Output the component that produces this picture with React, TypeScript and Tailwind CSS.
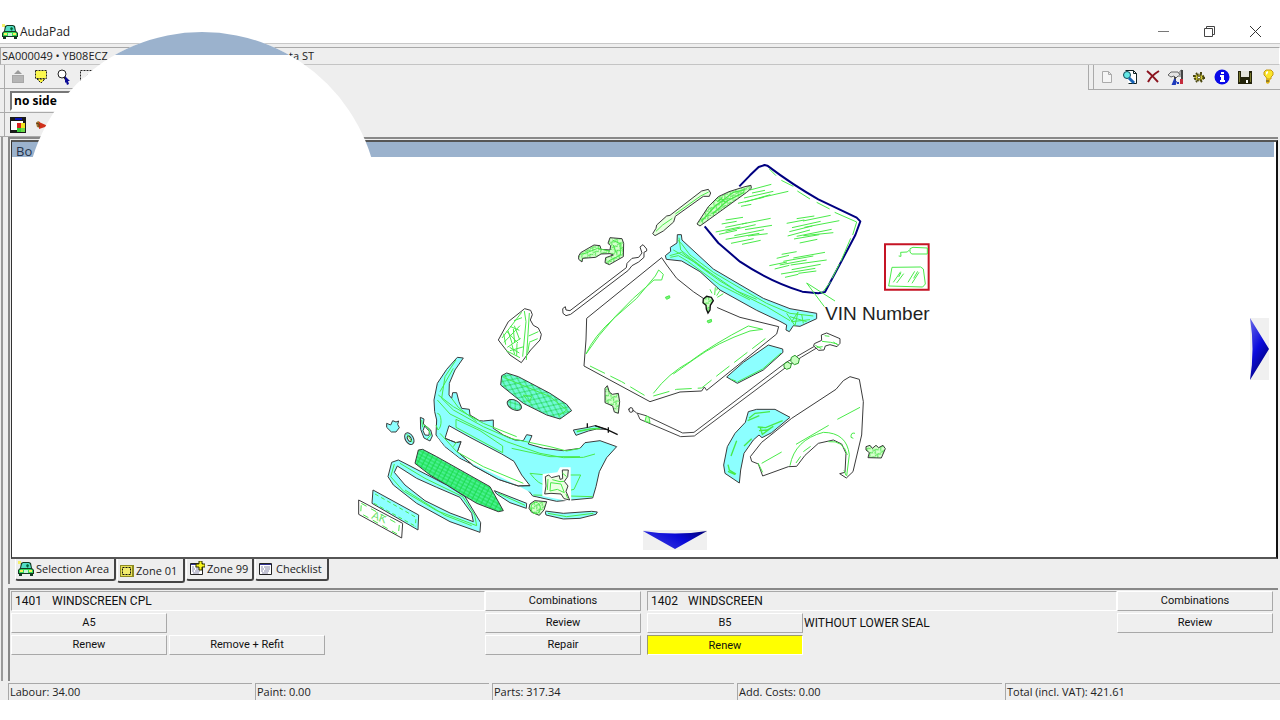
import React from "react";

const zones = [
  { label: "Selection Area", icon: <CarIcon />, width: "w-[101px]" },
  { label: "Zone 01", icon: <ZoneIcon />, width: "w-[68px]", active: true },
  { label: "Zone 99", icon: <ListIcon plus />, width: "w-[68px]" },
  { label: "Checklist", icon: <ListIcon />, width: "w-[74px]" },
];

const totals = [
  "Labour: 34.00",
  "Paint: 0.00",
  "Parts: 317.34",
  "Add. Costs: 0.00",
  "Total (incl. VAT): 421.61",
];

function CarIcon() {
  return (
    <svg width="16" height="16" viewBox="0 0 16 16" aria-hidden="true">
      <path d="M0 0h3v3H0z" fill="#f4f06a" />
      <path d="M5 1h6l2 1 1 5 2 2v4h-1v2h-3v-2H4v2H1v-2H0V9l2-2 1-5z" fill="#143a22" />
      <path d="M5 2h6l1 1 1 4H3l1-4z" fill="#52dcc4" />
      <path d="M1 9l2-1h10l2 1v3H1z" fill="#35d85a" />
      <path d="M2 9h3v2H2zM11 9h3v2h-3z" fill="#f6f35c" />
      <path d="M6 9h4v3H6z" fill="#c8f5dc" />
      <path d="M9 3l2 1-1 3-2-2z" fill="#063" />
    </svg>
  );
}

function ZoneIcon() {
  return (
    <svg width="14" height="14" viewBox="0 0 14 14" aria-hidden="true">
      <path d="M0 1h14v12H0z" fill="#8d8a22" />
      <path d="M1 2h11v10H1z" fill="#e9e255" />
      <path d="M2.500 3.500h8v7h-8z" fill="#f2ec6e" stroke="#111" strokeDasharray="2 1" />
    </svg>
  );
}

function ListIcon({ plus = false }: { plus?: boolean }) {
  return (
    <svg width="16" height="16" viewBox="0 0 16 16" aria-hidden="true">
      <path d="M1.500 2.500h12v11h-12z" fill="#fff" stroke="#222" />
      <path d="M2 3h11v1H2z" fill="#303090" />
      <path d="M3 6h2M6 6h6M3 8h3M7 8h5M3 10h2M6 10h5M4 12h6" stroke="#8888a8" />
      {plus && <path d="M10 0h3v3h3v3h-3v3h-3V6H7V3h3z" fill="#f8f51c" stroke="#333300" />}
    </svg>
  );
}

const leftTools = [
  {
    label: "Zone up",
    icon: (
      <>
        <path d="M8 1l4 4H4z" fill="#9b9b9b" />
        <path d="M2 6h12v8H2z" fill="#b5b5b5" />
        <path d="M2.500 6.500h11v7h-11z" fill="none" stroke="#999" strokeDasharray="1 1" />
      </>
    ),
  },
  {
    label: "Zone down",
    icon: (
      <>
        <path d="M4 10h8l-4 4z" fill="#f8f33a" stroke="#222" strokeDasharray="2 1" />
        <path d="M2.500 1.500h11v8h-11z" fill="#fbf84e" stroke="#222" strokeDasharray="2 1" />
      </>
    ),
  },
  {
    label: "Zoom",
    icon: (
      <>
        <circle cx="6" cy="5" r="4" fill="#fff" stroke="#222" />
        <path d="M8 8l3 4" stroke="#222" strokeWidth="2" />
        <path d="M9 7l5 5h-2l1 3-2 1-1-3-1 1z" fill="#0a0a96" />
      </>
    ),
  },
  {
    label: "Select region",
    icon: (
      <>
        <path d="M1.500 1.500h13v11h-13z" fill="none" stroke="#222" strokeDasharray="2 1" />
        <path d="M5 9l4-4" fill="none" stroke="#222" />
      </>
    ),
  },
];

const rightTools = [
  {
    label: "New",
    icon: <path d="M3.500 2.500h6l3 3v8h-9zM9.500 2.500v3h3" fill="#f5f5f5" stroke="#aaa" />,
  },
  {
    label: "Preview",
    icon: (
      <>
        <path d="M3.500 1.500h8l3 3v10h-8M11.500 1.500v3h3" fill="#fff" stroke="#122" />
        <circle cx="5" cy="6" r="3.500" fill="#63e7e5" stroke="#145" />
        <path d="M7 9l5 5" stroke="#1763b5" strokeWidth="3" />
      </>
    ),
  },
  {
    label: "Delete",
    icon: <path d="M2 2c4 3 7 7 11 11M14 2C9 5 5 9 3 13" fill="none" stroke="#8b131e" strokeWidth="2" />,
  },
  {
    label: "Tools",
    icon: (
      <>
        <path d="M0 6l3-3h7l2 3V2l2-1v6h-4l-2 2-2-2-3 1z" fill="#e4e4e4" stroke="#666" />
        <path d="M7 8v4M14 1v10" stroke="#444" strokeWidth="2" />
        <path d="M7 10l-2 5h2l1-3M9 14h2" stroke="#1d39bc" strokeWidth="2" fill="none" />
        <path d="M12 10h3v5h-3z" fill="#c42c3d" />
      </>
    ),
  },
  {
    label: "Settings",
    icon: (
      <>
        <ellipse cx="8" cy="8.500" rx="4.500" ry="3" fill="#d7ce35" stroke="#4b4812" strokeWidth="2" strokeDasharray="2 1" />
        <path d="M2 7h2M12 9h2M5 4l1 1M10 3v2M5 13l1-1M11 13l-1-1" stroke="#4b4812" strokeWidth="2" />
        <circle cx="8" cy="8.500" r="1.500" fill="#fff" stroke="#4b4812" />
      </>
    ),
  },
  {
    label: "Information",
    icon: (
      <>
        <circle cx="8" cy="8" r="7.500" fill="#0808e8" />
        <path d="M7 3h3v2H7zM6 6h4v5h1v2H6v-2h1V8H6z" fill="#fff" />
      </>
    ),
  },
  {
    label: "Save",
    icon: (
      <>
        <path d="M1 2h14v13H1z" fill="#23230b" />
        <path d="M4 2h8v6H4z" fill="#e3e3dc" />
        <path d="M2 3h1v10H2zM13 4h1v9h-1z" fill="#77762d" />
        <path d="M9 11h2v3H9z" fill="#fff" />
      </>
    ),
  },
  {
    label: "Hint",
    icon: (
      <>
        <path d="M4 3l2-2h5l2 2v3l-2 2v2H7L6 8 4 6z" fill="#fbe52a" stroke="#c69a14" />
        <path d="M6 3l2-1v2L6 6z" fill="#fff" />
        <path d="M6 10h4v3l-2 2-2-1z" fill="#e1b51a" />
        <path d="M6 12h3" stroke="#443" />
      </>
    ),
  },
];

function ToolButton({ label, children }: { label: string; children: React.ReactNode }) {
  return (
    <button type="button" aria-label={label} className="flex h-6 w-[23px] shrink-0 items-center justify-center">
      <svg width="16" height="16" viewBox="0 0 16 16">
        {children}
      </svg>
    </button>
  );
}

function PanelButton({ children, selected = false }: { children: React.ReactNode; selected?: boolean }) {
  return (
    <button
      type="button"
      className={
        selected
          ? "h-5 w-[156px] shrink-0 border border-t-[#9a9a70] border-l-[#9a9a70] border-r-white border-b-white bg-[#ffff00] pt-px text-center text-[11px]"
          : "h-5 w-[156px] shrink-0 border border-t-white border-l-white border-r-[#a8a8a8] border-b-[#a8a8a8] bg-[#efefef] text-center text-[11px]"
      }
    >
      {children}
    </button>
  );
}

function PartHeader({ code, name }: { code: string; name: string }) {
  return (
    <div className="flex h-5 flex-1 items-center gap-2.5 border border-t-[#a8a8a8] border-l-[#a8a8a8] border-r-white border-b-white pl-[3px]">
      <span>{code}</span>
      <span>{name}</span>
    </div>
  );
}

// part outlines are plotted in thirds of a pixel, one group per area of the car
function PartsDrawing() {
  const ink = { fill: "#fff", stroke: "#3a3a3a", strokeWidth: 3, strokeLinejoin: "round" as const };
  const cyan = { ...ink, fill: "#8cffff" };
  const green = { fill: "none", stroke: "#48ea48", strokeWidth: 3 };
  return (
    <svg viewBox="12 157 1264 400" className="block w-full" role="img" aria-label="Exploded view of front body parts">
      <defs>
        <pattern id="mesh" width="24" height="18" patternUnits="userSpaceOnUse" patternTransform="rotate(25)">
          <path d="M0 0h24v18H0z" fill="#72f8d8" />
          <path d="M0 0l24 18M24 0L0 18" stroke="#2bdc62" strokeWidth="3" />
        </pattern>
        <pattern id="grille" width="15" height="10" patternUnits="userSpaceOnUse" patternTransform="rotate(28)">
          <path d="M0 0h15v10H0z" fill="#48f092" />
          <path d="M0 5h15M7 0v10" stroke="#18dc48" strokeWidth="3" />
        </pattern>
        <pattern id="scribble" width="19" height="15" patternUnits="userSpaceOnUse" patternTransform="rotate(-30)">
          <path d="M0 0h19v15H0z" fill="#d8ffd0" />
          <path d="M0 4h11l8 5M3 14l6-7" fill="none" stroke="#4be34b" strokeWidth="3" />
        </pattern>
      </defs>

      {/* bumper, grilles and plates */}
      <g transform="translate(350 340) scale(.33333)">
        <path {...cyan} d="M340 54L322 52L290 88L262 130L252 180L254 215L260 240L258 285L285 320L330 355L400 390L450 412L530 445L548 468L620 484L728 474L738 440L748 395L770 353L800 320L750 302L705 308L690 325L640 332L580 325L535 312L546 287L530 284L520 302L495 300L460 285L430 265L430 240L400 243L388 242L360 225L358 208L335 205L327 185L320 158L308 158L305 175L297 165L298 130L315 90Z" />
        <path {...green} d="M318 60L285 110L275 175L310 210L400 260L480 295L600 320L650 333L690 325M262 180L300 222L380 262L470 305L570 340L640 353L700 352L735 342M318 238V262L458 338V318M318 238L390 272L458 318M485 325L600 350L690 350M262 220C275 220 278 260 264 270L258 255M310 85L270 155M305 175L325 202L380 245M540 400L590 405L585 432Q570 438 540 400M645 405H692L672 448L655 452M550 465L728 470M265 165L310 200L400 250L500 290" />
        <path {...ink} d="M297 257L360 292L455 342L492 364L515 405L540 437L505 438L445 418L370 377L322 335L333 305L318 308L285 295Z" />
        <path fill="#8cffff" d="M286 297L316 310L333 305L322 335L370 377L445 418L505 438L540 440V456L450 410L330 353L285 318L262 290L270 284L283 290Z" />
        <path {...ink} fill="none" d="M285 295L318 308L333 305L322 335L370 377L445 418L505 438L540 437" />
        <path {...green} d="M270 280L320 335L400 380L520 430M320 305L310 320" />
        <path {...ink} fill="url(#mesh)" d="M470 99L505 110L600 160L650 193L665 212L630 237L590 225L520 190L452 135L455 107Z" />
        <path {...green} d="M460 112L600 170L650 210L625 228M520 165L545 170L538 188Z" />
        <ellipse {...ink} fill="url(#mesh)" cx="493" cy="195" rx="23" ry="14" transform="rotate(28 493 195)" />
        <path {...cyan} d="M670 270L715 262L735 257L768 268L740 267L715 273L678 286Z" />
        <path {...green} d="M680 275L720 267L750 265" strokeWidth="5" />
        <path d="M712 263V250M735 257L770 268L803 284M775 262V278" fill="none" stroke="#111" strokeWidth="4" />

        <path {...cyan} d="M110 250L122 255L128 242L138 246L146 243L143 253L148 263L138 276L124 276L110 262Z" />
        <ellipse {...cyan} cx="178" cy="296" rx="12" ry="19" transform="rotate(-30 178 296)" />
        <ellipse {...ink} cx="178" cy="296" rx="5" ry="9" transform="rotate(-30 178 296)" />
        <path {...cyan} d="M211 232L222 237L220 252L242 270L247 288L240 303L222 294L212 268Z" />
        <path {...ink} d="M224 258L238 274L237 286L225 285L219 272Z" />
        <path {...green} d="M215 240L218 262M221 255L234 263L242 286L231 297M170 282L187 307" />

        <path {...cyan} d="M433 452L530 490L529 505L480 488L440 462Z" />
        <path {...green} d="M445 460L525 496" />
        <path {...cyan} d="M585 513L640 520L725 514L742 516L738 523L690 535L640 537L588 525Z" />
        <path {...green} d="M594 520L650 530L730 520" />
        <path {...ink} fill="url(#grille)" d="M205 330L218 328L260 350L420 440L460 512L445 515L380 490L240 405L195 370Z" />
        <path {...cyan} d="M145 360L125 367L114 410L130 435L200 490L300 545L390 577L392 548L345 470L290 435L165 370Z" />
        <path {...ink} d="M142 378L133 397L165 435L225 482L300 519L370 545L365 520L330 472L260 442L200 415Z" />
        <path {...green} d="M133 372L122 410L160 453L260 512L380 557L374 525L338 470L225 415L150 370M165 450L285 526L365 557" />
        <path {...cyan} d="M69 450L206 525L204 570L66 490Z" />
        <path {...green} d="M75 462L198 532L196 560M72 490L195 558" strokeDasharray="12 9" />
        <path {...ink} d="M26 480L158 550L155 594L26 523Z" />
        <path {...green} d="M34 490L148 554L145 584L32 520Z" strokeDasharray="18 15" />
        <text x="63" y="535" fontSize="34" fontFamily="Liberation Sans" fill="#69df69" transform="rotate(20 63 535)">AK</text>

        <circle cx="560" cy="502" r="29" fill="#fff" />
        <path {...ink} fill="url(#scribble)" d="M540 492L554 482L590 485L582 510L568 526L545 517L537 505Z" />
        <ellipse {...green} cx="557" cy="504" rx="14" ry="17" />
        <path d="M578 402L622 397L630 382L662 382L662 418L664 486L638 480L577 468Z" fill="#fff" />
        <path {...ink} fill="#edffe4" d="M586 410L596 405L604 413L628 407L630 418L638 416L637 390H655L653 410L643 424L654 438L648 454L659 480L642 476L633 462L603 460L584 462L588 438Z" />
        <path {...green} d="M600 453L602 428L633 432L643 458L622 448ZM637 399L650 410M642 424L630 425L607 419M594 417L592 450M648 462L653 475" />
      </g>

      {/* bonnet, stays and latches */}
      <g transform="translate(550 230) scale(.33333)">
        <path {...ink} d="M335 83L110 265L108 330L102 408L300 515L390 486L455 483L463 471L470 481L680 312L686 290L570 262L500 232L430 185L380 145L350 105Z" />
        <path {...green} d="M326 120L340 133L335 150L312 150Q180 260 108 372Q130 320 195 262L260 205L316 138ZM310 490Q355 430 420 395Q490 342 595 288L638 298L600 303Q500 338 432 388L370 432" />
        <path {...green} fill="#7df07d" d="M346 202L358 197L360 203L350 208ZM471 273L484 268L485 275L475 279Z" />
        <path {...green} d="M120 408L215 455L292 501M310 498L380 478L455 474L510 430L660 315" strokeDasharray="50 18" />
        <path d="M482 203L460 225L505 245L498 222Z" fill="#fff" />
        <path {...green} d="M486 190L480 178M494 195L496 172M500 197L510 181M502 202L520 191M500 181L505 165M516 184L520 170" />
        <path d="M460 207L470 199L484 202L490 212L481 226L480 240L474 249L469 237L468 226L459 218Z" fill="url(#scribble)" stroke="#111" strokeWidth="4" />

        <path {...ink} fill="url(#scribble)" d="M86 78L92 68L132 45L150 47L153 58L180 60L182 47L174 40L180 23L216 26L221 40L220 80L178 104L165 98L167 83L190 75L180 71L153 72L137 82L98 85L96 96L86 88Z" />
        <path {...green} d="M98 73L143 55L180 64M187 30L213 42L211 76L177 92M190 45L199 69" />
        <path {...ink} d="M290 57L279 44L270 51L276 69L266 82L246 85L231 100L229 113L60 242L48 240L46 230L38 236L39 250L48 257L62 253L235 121L246 107L266 96L282 82L282 67L290 63Z" />
        <path {...ink} fill="url(#scribble)" d="M165 475L172 467L178 486L187 493L205 490L209 515L205 550L193 546L188 528L165 518Z" />
        <path d="M250 545L235 538L241 534L260 549L288 557L398 609L432 607L710 396L750 374L800 345" fill="none" stroke="#444" strokeWidth="3" />
        <path d="M262 550L270 568L392 620L433 618L708 412L755 381L800 354" fill="none" stroke="#444" strokeWidth="3" />
        <ellipse cx="243" cy="540" rx="6" ry="7" {...ink} />
        <path {...green} fill="#c8ffc0" d="M289 558L285 574L300 578L297 562Z" />
        <path {...ink} fill="#c8ffc0" stroke="#279a27" d="M702 402L712 396L724 402L721 414L710 418L702 412ZM724 382L735 376L748 387L745 400L733 404L722 394Z" />
        <path {...ink} d="M791 348L793 341L815 331L814 315L830 309L870 326L870 340L861 350L840 344L826 348L822 360L806 361Z" />
        <path {...green} d="M796 346L814 356M816 334L842 337L862 342M824 317L838 319M850 336L864 345M800 352L818 350" />
        <path {...cyan} d="M655 345L698 357L699 367L640 420L562 460L530 441L580 397Z" />
        <path {...green} d="M562 456L638 417L693 369M542 447L559 454" />
      </g>

      {/* windscreen, scuttle and wiper linkage */}
      <g transform="translate(640 155) scale(.33333)">
        <path d="M298 94L330 61L356 36L374 30L382 32Q460 91 535 133L650 188L661 199L646 240L600 327L555 411L535 415L487 410Q390 380 300 320L235 264L194 214" fill="#fff" stroke="#000080" strokeWidth="6" strokeLinejoin="round" />
        <path {...green} d="M388 42L408 62M424 76L460 94M472 108L510 132M530 142L569 162M584 172L650 201L638 240M632 250L602 320M598 327L576 370M572 380L550 409" />
        <path {...green} d="M330 105L394 88M336 114L375 106M312 129L400 109M315 141L391 119M358 129L445 109M294 145L371 127M303 154L334 148M257 195L309 187M245 207L290 199M306 207L392 190M256 217L320 204M227 231L301 216M257 229L347 209M315 224L396 211M237 238L291 226M283 242L372 224M257 253L358 235M273 265L341 251M306 268L362 256M324 243L383 236M470 191L523 183M440 205L493 195M489 198L572 181M456 218L542 199M493 217L598 197M448 230L517 213M443 243L510 225M470 244L575 223M490 242L580 233M462 252L538 239M479 264L532 253M425 298L470 290M410 310L447 301M460 309L555 292M430 319L520 303M388 332L441 321M419 330L500 315M452 330L560 315M404 342L448 331M455 344L542 328M423 357L526 340M435 367L475 358M475 355L529 348" />
        <path {...ink} fill="#e8ffe1" d="M38 236L48 220L50 210L80 183L90 181L185 108L205 103L212 114L208 124L190 124L106 184L101 201L70 228L45 242Z" />
        <path {...green} d="M48 229L68 210L97 190M106 177L182 123L206 111" />
        <path {...ink} fill="url(#scribble)" d="M171 207L205 155L235 125L267 110L315 95L333 91L334 100L320 112L180 213Z" />
        <path {...green} strokeWidth="4" d="M184 199L225 154L280 112L316 104M218 176L261 138L312 112M232 140L244 131L259 144" />
        <path {...cyan} d="M112 239L124 239L126 255L220 342L300 389L370 430L450 461L530 475V491L480 514L460 512L448 530L438 525L440 510L420 499L350 466L240 405L180 350L125 318L79 313L76 302L92 289L91 277L111 264Z" />
        <path {...green} d="M113 255L126 268L150 300L220 352L310 405L380 445L450 475L520 483M89 302L125 292L180 335L240 378L310 420L380 455L450 497M117 248L122 285L210 355M91 307L115 302L142 318L240 390L330 435M440 475L465 512L474 471L455 500L510 494M100 285L170 325L290 408L350 433M485 478L490 505M450 485L500 500" />
        <path {...green} d="M585 438L500 384L553 455" />
        <path d="M735 268H866V404H735Z" fill="#fff" stroke="#c51425" strokeWidth="6" />
        <path {...green} d="M756 337L842 336L850 342L856 387L848 396L746 393ZM760 382L782 350M770 384L791 356M776 366L783 353M804 382L824 349M816 385L837 352M821 370L833 349M776 303L783 304L782 292L802 291L808 285M810 281L819 277L862 279V297H815L810 291Z" />
      </g>
      <text x="825" y="320" fontSize="19" fontFamily="Liberation Sans, sans-serif" fill="#222">VIN Number</text>

      {/* wing and wheel arch liner */}
      <g transform="translate(700 330) scale(.33333)">
        <path {...cyan} d="M270 262L225 238H170L145 245L136 277L105 310L82 350L71 405L75 430L118 459L122 420L132 370L160 330L177 315L186 323L215 308Z" />
        <path {...green} strokeWidth="4" d="M147 265L165 250L210 245M173 291L197 293L248 272M177 302L202 300L220 289L187 313L181 294M143 272L178 257M110 332L93 378M84 404L88 420L108 432M132 348L155 326M84 424L106 434" />
        <path {...ink} d="M450 140L430 152L408 178L275 265L185 337L151 380L155 394L175 402L188 438L265 410L290 409L315 376L355 340L400 330L425 342L438 370L435 427L419 431L439 444L459 425L485 315L490 215L478 148Z" />
        <path {...green} d="M185 400L245 366M288 343L386 286M412 268L480 232M270 407Q284 330 370 307Q440 308 448 374L440 438M288 399L302 379M310 365L332 349M385 335Q430 330 442 375M465 310Q452 306 453 322L460 325M174 399L188 427M432 421L438 436" />
        <path {...ink} fill="url(#scribble)" d="M498 350L510 346L517 355L528 346L536 353L549 346L556 356L544 384L504 383L508 368L498 360Z" />
      </g>

      {/* headlamp */}
      <g transform="translate(480 180) scale(.33333)">
        <path {...ink} d="M134 386L152 391L157 404L151 420L160 436L175 444L184 463L180 480L152 510L124 548L90 525L55 480L85 425Z" />
        <path {...green} d="M133 393L138 425L128 530M148 399L139 540M66 474L125 397M72 487L120 437M82 502L122 475M90 512L132 500M102 422L126 413M90 439L118 451M80 454L114 489M103 437L119 479M146 468L175 455M147 487L173 476M143 518L148 489M96 495L104 523M111 490L110 528M71 461L77 494M84 452L97 492M100 447L104 489M79 512L120 533M89 502L118 519" />
      </g>
    </svg>
  );
}

export default function App() {
  return (
    <main className="relative min-h-screen overflow-hidden bg-white pt-5 font-['Open_Sans','Noto_Sans',sans-serif] text-[11px] leading-4 text-[#222]">
      <header className="flex h-[23px] items-center bg-white pl-0.5">
        <CarIcon />
        <h1 className="ml-0.5 flex-1 text-[12px]">AudaPad</h1>
        <button type="button" aria-label="Minimise" className="flex w-[46px] justify-center">
          <svg width="11" height="11" viewBox="0 0 11 11">
            <path d="M0 5.500h11" stroke="#777" />
          </svg>
        </button>
        <button type="button" aria-label="Restore" className="flex w-[46px] justify-center">
          <svg width="11" height="11" viewBox="0 0 11 11" fill="none" stroke="#444">
            <path d="M.5 2.500h8v8h-8zM2.500 2.500v-2h8v8h-2" />
          </svg>
        </button>
        <button type="button" aria-label="Close" className="mr-0.5 flex w-[46px] justify-center">
          <svg width="11" height="11" viewBox="0 0 11 11" stroke="#333">
            <path d="M0 0l11 11M11 0L0 11" />
          </svg>
        </button>
      </header>

      <div className="border-t border-[#c8c8c8] bg-[#eeeeee]">
        <div className="mt-[3px] flex h-[18px] items-center border border-t-[#a8a8a8] border-l-[#a8a8a8] border-r-white border-b-[#c4c4c4] pl-px whitespace-pre">
          <span className="w-[287px]">SA000049 • YB08ECZ</span>
          <span>ta ST</span>
        </div>

        <div className="flex items-start justify-between">
          <div className="w-[300px]">
            <div className="flex h-6 border-b border-[#aaaaaa]">
              <div className="mr-px w-[5px] border-r border-[#aaaaaa]" />
              {leftTools.map((tool) => (
                <ToolButton key={tool.label} label={tool.label}>
                  {tool.icon}
                </ToolButton>
              ))}
            </div>
            <div className="flex h-6 items-center border-b border-[#aaaaaa]">
              <div className="mr-[5px] h-full w-[5px] border-r border-[#aaaaaa]" />
              <select
                aria-label="Side"
                className="h-5 w-36 appearance-none border-2 border-t-[#777] border-l-[#777] border-r-white border-b-white bg-white pl-0.5 font-['Open_Sans',sans-serif] text-[12px] leading-4 font-bold text-black"
              >
                <option>no side</option>
              </select>
            </div>
            <div className="flex h-6 border-b border-[#aaaaaa]">
              <div className="mr-px w-[5px] border-r border-[#aaaaaa]" />
              <ToolButton label="Colours">
                <path d="M0 0h16v16H0z" fill="#1a1a1a" />
                <path d="M5 1h7v2H5z" fill="#0a12b4" />
                <path d="M1 4h12v9H1z" fill="#fff" />
                <path d="M7 6h4v5H7z" fill="#d92020" />
                <path d="M11 6h4v5h-4z" fill="#f2e31d" />
                <path d="M7 11h4v4H7z" fill="#37ce37" />
                <path d="M11 11h4v4h-4z" fill="#6ddb47" />
              </ToolButton>
              <ToolButton label="Direction">
                <path d="M3 6l2-2 2 1v6l-3-1z" fill="#a8702a" />
                <path d="M6 5l9 4-9 3z" fill="#d0301b" />
                <path d="M3 6l3 1v3" fill="none" stroke="#58401a" />
              </ToolButton>
            </div>
          </div>

          <div className="flex h-[25px] overflow-hidden border-b border-l border-[#aaaaaa] pr-px">
            <div className="mr-px w-[5px] border-r border-[#aaaaaa]" />
            {rightTools.map((tool) => (
              <ToolButton key={tool.label} label={tool.label}>
                {tool.icon}
              </ToolButton>
            ))}
          </div>
        </div>

        <div className="ml-px border-l-2 border-[#999] pl-[5px]">
          <section className="mr-0.5 border-t-2 border-l-2 border-[#888]">
            <div className="mt-px ml-px border-t-2 border-r-2 border-b-2 border-l border-t-[#555] border-r-[#111] border-b-[#555] border-l-[#333] bg-white">
              <h2 className="mr-0.5 h-[15px] bg-[#9bb2cd] pl-1 text-[13px] leading-[18px] text-[#24334a]">Bo</h2>
              <div className="relative">
                <PartsDrawing />
                <button type="button" aria-label="Next view" className="absolute top-[161px] right-[7px] bg-[#f0f0f0]">
                  <svg width="19" height="62" viewBox="0 0 19 62" className="block">
                    <defs>
                      <linearGradient id="next" x1="0" y1="0" x2=".5" y2="1">
                        <stop offset="0" stopColor="#6868e8" />
                        <stop offset=".55" stopColor="#0b0bdc" />
                        <stop offset="1" stopColor="#000070" />
                      </linearGradient>
                    </defs>
                    <path d="M0 0l19 31L0 62q5-31 0-62z" fill="url(#next)" />
                  </svg>
                </button>
                <button type="button" aria-label="View below" className="absolute top-[373px] left-[631px] bg-[#f0f0f0]">
                  <svg width="64" height="20" viewBox="0 0 64 20" className="block">
                    <defs>
                      <linearGradient id="below" x1="0" y1=".5" x2="1" y2="0">
                        <stop offset="0" stopColor="#3535dc" />
                        <stop offset=".5" stopColor="#0a0ad8" />
                        <stop offset="1" stopColor="#000070" />
                      </linearGradient>
                    </defs>
                    <path d="M0 1q32 5 64 0L32 19z" fill="url(#below)" />
                  </svg>
                </button>
              </div>
            </div>

            <nav className="flex h-[25px] items-start gap-px pl-[5px]">
              {zones.map((zone) => (
                <button
                  key={zone.label}
                  type="button"
                  className={`${zone.width} ${zone.active ? "h-6 pt-px" : "h-[22px]"} flex shrink-0 items-center gap-0.5 rounded-b-[3px] border-r-2 border-b-2 border-l border-l-white border-r-[#444] border-b-[#444] bg-[#eeeeee] pl-0.5 whitespace-nowrap`}
                >
                  {zone.icon}
                  {zone.label}
                </button>
              ))}
            </nav>
          </section>

          <section className="mt-1 mr-0.5 h-[93px] border-t-2 border-l-2 border-[#888] pt-px pr-[5px] pl-px font-[Roboto,sans-serif] text-[12px] text-[#111]">
            <div className="grid grid-cols-[630fr_626fr] gap-1.5">
              <div className="flex flex-col gap-0.5">
                <div className="flex">
                  <PartHeader code="1401" name="WINDSCREEN CPL" />
                  <PanelButton>Combinations</PanelButton>
                </div>
                <div className="flex justify-between">
                  <PanelButton>A5</PanelButton>
                  <PanelButton>Review</PanelButton>
                </div>
                <div className="flex">
                  <PanelButton>Renew</PanelButton>
                  <div className="ml-0.5 flex-1">
                    <PanelButton>Remove + Refit</PanelButton>
                  </div>
                  <PanelButton>Repair</PanelButton>
                </div>
              </div>
              <div className="flex flex-col gap-0.5">
                <div className="flex">
                  <PartHeader code="1402" name="WINDSCREEN" />
                  <PanelButton>Combinations</PanelButton>
                </div>
                <div className="flex items-center">
                  <PanelButton>B5</PanelButton>
                  <span className="ml-px flex-1">WITHOUT LOWER SEAL</span>
                  <PanelButton>Review</PanelButton>
                </div>
                <div className="flex">
                  <PanelButton selected>Renew</PanelButton>
                </div>
              </div>
            </div>
          </section>
        </div>

        <footer className="grid grid-cols-[244fr_234fr_242fr_265fr_275fr] gap-[3px] pt-0.5 pl-2">
          {totals.map((total) => (
            <div key={total} className="h-[17px] border-t border-l border-[#a8a8a8] pl-px">
              {total}
            </div>
          ))}
        </footer>
      </div>

      <div className="pointer-events-none absolute top-8 left-[25px] size-[354px] overflow-hidden rounded-full bg-white">
        <div className="h-[23px] bg-[#9bb2cd]" />
      </div>
    </main>
  );
}
